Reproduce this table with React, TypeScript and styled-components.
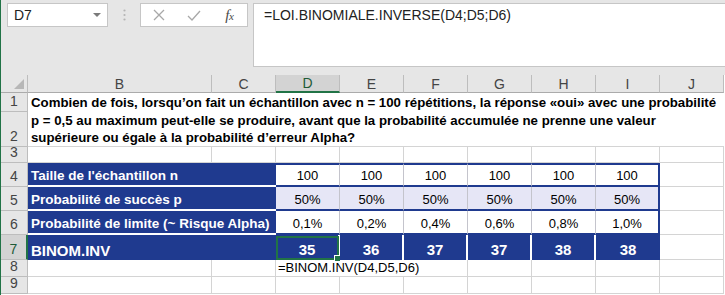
import React from "react";
import styled, { createGlobalStyle, css } from "styled-components";

const GREEN = "#217346";
const NAVY = "#1f3a8f";
const LAVENDER = "#e6e6f6";
const GRID = "#d4d4d4";
const CHROME = "#e6e6e6";
const HEAD_LINE = "#bdbdbd";

const GlobalStyle = createGlobalStyle`
  html, body { margin: 0; padding: 0; background: #fff; overflow: hidden; }
  * { box-sizing: border-box; }
`;

const Window = styled.div`
  width: 725px;
  height: 295px;
  overflow: hidden;
  border-left: 1px solid ${GREEN};
  background: #fff;
  font-family: "Liberation Sans", Arial, sans-serif;
  color: #000;
`;

/* ---------- formula bar ---------- */

const FormulaBar = styled.div`
  height: 75px;
  background: ${CHROME};
  display: flex;
  align-items: flex-start;
  padding: 3px 0 0 6px;
`;

const NameBox = styled.div`
  width: 101px;
  height: 24px;
  background: #fff;
  border: 1px solid #c6c6c6;
  display: flex;
  align-items: center;
  justify-content: space-between;
  padding: 0 6px;
  font-size: 14px;
  color: #222;
`;

const Caret = styled.span`
  width: 0;
  height: 0;
  border-left: 4px solid transparent;
  border-right: 4px solid transparent;
  border-top: 4px solid #7a7a7a;
`;

const Grip = styled.div`
  width: 32px;
  height: 24px;
  display: flex;
  align-items: center;
  justify-content: center;
`;

const ButtonGroup = styled.div`
  width: 108px;
  height: 24px;
  background: #fff;
  border: 1px solid #c6c6c6;
  display: grid;
  grid-template-columns: repeat(3, 1fr);
`;

const BarButton = styled.span`
  display: flex;
  align-items: center;
  justify-content: center;
  color: #a8a8a8;
`;

const FxLabel = styled.span`
  font-family: "Liberation Serif", "DejaVu Serif", serif;
  font-style: italic;
  font-size: 15px;
  color: #4a4a4a;
  letter-spacing: -0.5px;
  & > small {
    font-size: 11px;
  }
`;

const FormulaInput = styled.div`
  flex: 1;
  margin-left: 5px;
  height: 64px;
  background: #fff;
  border: 1px solid #c6c6c6;
  border-right: none;
  padding: 2px 10px 0;
  font-size: 14px;
  line-height: 18px;
  color: #222;
  white-space: nowrap;
`;

/* ---------- sheet grid ---------- */

const Sheet = styled.div`
  display: grid;
  grid-template-columns: 27px 184px repeat(8, 64px);
  grid-template-rows: 18px 19px 35px 16px 24px 24px 24px 25px 17px 17px;
  font-size: 13px;
`;

const Corner = styled.div`
  background: ${CHROME};
  border-right: 1px solid ${HEAD_LINE};
  border-bottom: 1px solid #ababab;
  position: relative;
  &::after {
    content: "";
    position: absolute;
    right: 3px;
    bottom: 3px;
    width: 0;
    height: 0;
    border-left: 10px solid transparent;
    border-bottom: 10px solid #b7b7b7;
  }
`;

const ColHead = styled.div<{ $active?: boolean }>`
  background: ${CHROME};
  border-right: 1px solid ${HEAD_LINE};
  border-bottom: 1px solid #ababab;
  display: flex;
  align-items: center;
  justify-content: center;
  font-size: 14px;
  color: #444;
  ${(p) =>
    p.$active &&
    css`
      background: #d3d3d3;
      border-bottom: 2px solid ${GREEN};
      color: #1e5b37;
    `}
`;

const RowHead = styled.div<{ $active?: boolean }>`
  background: ${CHROME};
  border-right: 1px solid ${HEAD_LINE};
  border-bottom: 1px solid ${HEAD_LINE};
  display: flex;
  align-items: flex-end;
  justify-content: center;
  font-size: 14px;
  line-height: 17px;
  padding-bottom: 1px;
  color: #444;
  ${(p) =>
    p.$active &&
    css`
      background: #d3d3d3;
      border-right: 2px solid ${GREEN};
      color: #1e5b37;
    `}
`;

const Cell = styled.div<{ $span?: number }>`
  border-right: 1px solid ${GRID};
  border-bottom: 1px solid ${GRID};
  ${(p) => p.$span && css`grid-column: span ${p.$span};`}
`;

const Question = styled.div`
  grid-column: 2 / -1;
  grid-row: span 2;
  border-bottom: 1px solid ${GRID};
  padding: 1px 0 0 3px;
  font-weight: bold;
  font-size: 13.25px;
  line-height: 17.5px;
  white-space: nowrap;
`;

const Label = styled.div<{ $result?: boolean }>`
  grid-column: span 2;
  background: ${NAVY};
  color: #fff;
  font-weight: bold;
  font-size: ${(p) => (p.$result ? "15px" : "13.5px")};
  line-height: 17px;
  display: flex;
  align-items: flex-end;
  padding: 0 0 1px 3px;
  white-space: nowrap;
  border-bottom: ${(p) => (p.$result ? "none" : "2px solid #fff")};
`;

const DataCell = styled.div<{ $first?: boolean; $last?: boolean; $shaded?: boolean }>`
  background: ${(p) => (p.$shaded ? LAVENDER : "#fff")};
  border-top: ${(p) => (p.$first ? `2px solid ${NAVY}` : "none")};
  border-bottom: 2px solid ${NAVY};
  border-right: ${(p) => (p.$last ? `2px solid ${NAVY}` : "1px solid #c4c4cc")};
  display: flex;
  align-items: flex-end;
  justify-content: center;
  line-height: 17px;
  padding-bottom: 1px;
`;

const ResultCell = styled.div<{ $last?: boolean }>`
  position: relative;
  background: ${NAVY};
  color: #fff;
  font-weight: bold;
  font-size: 15px;
  line-height: 17px;
  border-right: ${(p) => (p.$last ? "none" : "2px solid #fff")};
  display: flex;
  align-items: flex-end;
  justify-content: center;
  padding-bottom: 2px;
`;

const Selection = styled.div`
  position: absolute;
  top: 1px;
  left: 0;
  right: -1px;
  bottom: 0;
  border: 2px solid ${GREEN};
  pointer-events: none;
`;

const FillHandle = styled.div`
  position: absolute;
  right: -4px;
  bottom: -4px;
  width: 7px;
  height: 7px;
  background: ${GREEN};
  border: 1px solid #fff;
`;

const Note = styled(Cell)`
  display: flex;
  align-items: flex-end;
  padding: 0 0 0 2px;
  line-height: 16px;
  white-space: nowrap;
`;

const sizes = ["100", "100", "100", "100", "100", "100"];
const probs = ["50%", "50%", "50%", "50%", "50%", "50%"];
const alphas = ["0,1%", "0,2%", "0,4%", "0,6%", "0,8%", "1,0%"];
const results = ["35", "36", "37", "37", "38", "38"];
const columns = ["B", "C", "D", "E", "F", "G", "H", "I", "J"];

function GripDots() {
  return (
    <svg width="3" height="12" viewBox="0 0 3 12">
      <circle cx="1.5" cy="1.5" r="1.1" fill="#b4b4b4" />
      <circle cx="1.5" cy="6" r="1.1" fill="#b4b4b4" />
      <circle cx="1.5" cy="10.5" r="1.1" fill="#b4b4b4" />
    </svg>
  );
}

function CancelIcon() {
  return (
    <svg width="12" height="12" viewBox="0 0 12 12">
      <path d="M1 1 L11 11 M11 1 L1 11" stroke="currentColor" strokeWidth="1.3" fill="none" />
    </svg>
  );
}

function EnterIcon() {
  return (
    <svg width="14" height="11" viewBox="0 0 14 11">
      <path d="M1 6 L5 10 L13 1" stroke="currentColor" strokeWidth="1.3" fill="none" />
    </svg>
  );
}

function EmptyRow({ from = 0 }: { from?: number }) {
  return (
    <>
      {columns.slice(from).map((c) => (
        <Cell key={c} />
      ))}
    </>
  );
}

export default function App() {
  return (
    <Window>
      <GlobalStyle />
      <FormulaBar>
        <NameBox>
          <span>D7</span>
          <Caret />
        </NameBox>
        <Grip>
          <GripDots />
        </Grip>
        <ButtonGroup>
          <BarButton>
            <CancelIcon />
          </BarButton>
          <BarButton>
            <EnterIcon />
          </BarButton>
          <BarButton>
            <FxLabel>
              f<small>x</small>
            </FxLabel>
          </BarButton>
        </ButtonGroup>
        <FormulaInput>=LOI.BINOMIALE.INVERSE(D4;D5;D6)</FormulaInput>
      </FormulaBar>

      <Sheet>
        <Corner />
        {columns.map((c) => (
          <ColHead key={c} $active={c === "D"}>
            {c}
          </ColHead>
        ))}

        <RowHead>1</RowHead>
        <Question>
          Combien de fois, lorsqu’on fait un échantillon avec n = 100 répétitions, la réponse «oui» avec une probabilité
          <br />
          p = 0,5 au maximum peut-elle se produire, avant que la probabilité accumulée ne prenne une valeur
          <br />
          supérieure ou égale à la probabilité d’erreur Alpha?
        </Question>
        <RowHead>2</RowHead>

        <RowHead>3</RowHead>
        <EmptyRow />

        <RowHead>4</RowHead>
        <Label>Taille de l'échantillon n</Label>
        {sizes.map((v, i) => (
          <DataCell key={i} $first $last={i === 5}>
            {v}
          </DataCell>
        ))}
        <Cell />

        <RowHead>5</RowHead>
        <Label>Probabilité de succès p</Label>
        {probs.map((v, i) => (
          <DataCell key={i} $shaded $last={i === 5}>
            {v}
          </DataCell>
        ))}
        <Cell />

        <RowHead>6</RowHead>
        <Label>Probabilité de limite (~ Risque Alpha)</Label>
        {alphas.map((v, i) => (
          <DataCell key={i} $last={i === 5}>
            {v}
          </DataCell>
        ))}
        <Cell />

        <RowHead $active>7</RowHead>
        <Label $result>BINOM.INV</Label>
        {results.map((v, i) => (
          <ResultCell key={i} $last={i === 5}>
            {v}
            {i === 0 && (
              <Selection>
                <FillHandle />
              </Selection>
            )}
          </ResultCell>
        ))}
        <Cell />

        <RowHead>8</RowHead>
        <Cell />
        <Cell />
        <Note $span={3}>=BINOM.INV(D4,D5,D6)</Note>
        <EmptyRow from={5} />

        <RowHead>9</RowHead>
        <EmptyRow />
      </Sheet>
    </Window>
  );
}
